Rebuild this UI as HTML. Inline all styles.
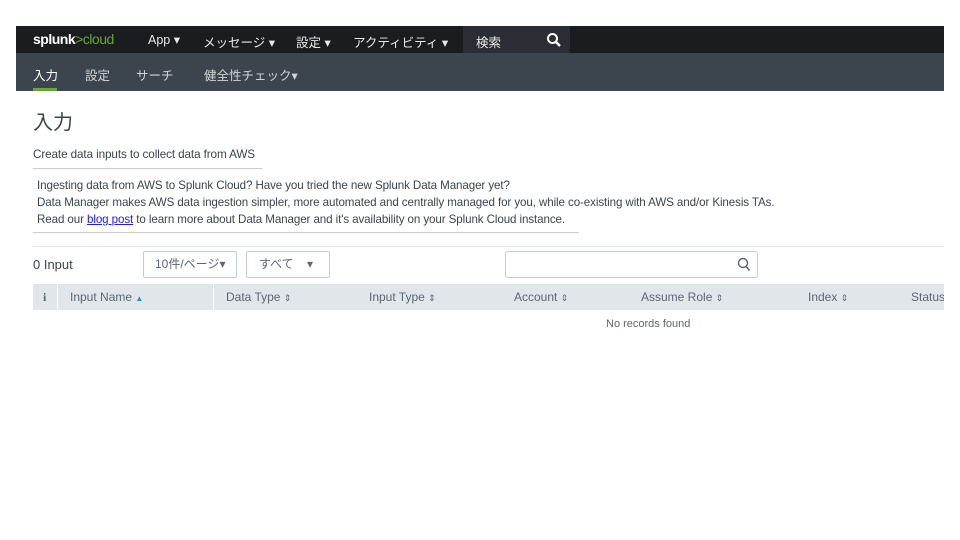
<!DOCTYPE html>
<html><head><meta charset="utf-8"><style>
*{margin:0;padding:0;box-sizing:border-box}
body{width:960px;height:540px;background:#fff;font-family:"Liberation Sans","Noto Sans CJK JP",sans-serif;position:relative;overflow:hidden;color:#3c444d}
.abs{position:absolute;white-space:nowrap}
#top{position:absolute;left:16px;top:26px;width:928px;height:27px;background:#1a1c20}
#sub{position:absolute;left:16px;top:53px;width:928px;height:38px;background:#3c444d}
.t{color:#e8e8e8;font-size:12.5px}
.s{color:#d0d3d6;font-size:12.5px}
.th{position:absolute;top:284px;height:26px;background:#e1e6eb;font-size:12px;color:#5c6773;line-height:26px;padding-left:12px}
</style></head><body>
<div id="top"></div>
<div class="abs" style="left:33px;top:31px;font-size:14px;font-weight:bold;color:#fff;letter-spacing:-0.5px">splunk<span style="color:#65a637;font-weight:normal">&gt;cloud</span></div>
<div class="abs t" style="left:148px;top:32px">App ▾</div>
<div class="abs t" style="left:203px;top:32px">メッセージ ▾</div>
<div class="abs t" style="left:296px;top:32px">設定 ▾</div>
<div class="abs t" style="left:353px;top:32px">アクティビティ ▾</div>
<div class="abs" style="left:463px;top:26px;width:107px;height:27px;background:#2a2d33"></div>
<div class="abs t" style="left:476px;top:32px">検索</div>
<svg class="abs" style="left:546px;top:32px" width="16" height="16" viewBox="0 0 16 16"><circle cx="6.5" cy="6.5" r="4.5" fill="none" stroke="#fff" stroke-width="2"/><line x1="10" y1="10" x2="14" y2="14" stroke="#fff" stroke-width="2.4"/></svg>
<div id="sub"></div>
<div class="abs s" style="left:33px;top:65px;color:#fff">入力</div>
<div class="abs" style="left:33px;top:88px;width:24px;height:3px;background:#65a637"></div>
<div class="abs s" style="left:85px;top:65px">設定</div>
<div class="abs s" style="left:136px;top:65px">サーチ</div>
<div class="abs s" style="left:204px;top:65px">健全性チェック▾</div>
<div class="abs" style="left:33px;top:106px;font-size:20px;color:#3c444d">入力</div>
<div class="abs" style="left:33px;top:148px;font-size:11.7px;letter-spacing:-0.1px">Create data inputs to collect data from AWS</div>
<div class="abs" style="left:33px;top:168px;width:229px;height:1px;background:#ccc"></div>
<div class="abs" style="left:37px;top:177px;font-size:11.6px;line-height:17px;letter-spacing:-0.1px">Ingesting data from AWS to Splunk Cloud? Have you tried the new Splunk Data Manager yet?<br>Data Manager makes AWS data ingestion simpler, more automated and centrally managed for you, while co-existing with AWS and/or Kinesis TAs.<br>Read our <span style="color:#1a1aff;text-decoration:underline">blog post</span> to learn more about Data Manager and it's availability on your Splunk Cloud instance.</div>
<div class="abs" style="left:33px;top:232px;width:546px;height:1px;background:#ccc"></div>
<div class="abs" style="left:33px;top:246px;width:911px;height:1px;background:#e6e6e6"></div>
<div class="abs" style="left:33px;top:257px;font-size:13px">0 Input</div>
<div class="abs" style="left:143px;top:251px;width:94px;height:27px;border:1px solid #c3cbd4;border-radius:2px;font-size:12px;line-height:25px;padding-left:11px;color:#5c6773">10件/ページ▾</div>
<div class="abs" style="left:246px;top:251px;width:84px;height:27px;border:1px solid #c3cbd4;border-radius:2px;font-size:12px;line-height:25px;padding-left:12px;color:#5c6773">すべて &nbsp;&nbsp; ▾</div>
<div class="abs" style="left:505px;top:251px;width:253px;height:27px;border:1px solid #c3cbd4;border-radius:3px"></div>
<svg class="abs" style="left:737px;top:257px" width="14" height="15" viewBox="0 0 14 15"><circle cx="6" cy="6" r="4.5" fill="none" stroke="#5c6773" stroke-width="1.4"/><line x1="9.2" y1="9.5" x2="12.5" y2="13.5" stroke="#5c6773" stroke-width="1.6"/></svg>
<div class="th" style="left:33px;width:24px;padding-left:10px;font-weight:bold;font-family:'Liberation Serif',serif">i</div>
<div class="th" style="left:58px;width:155px">Input Name <span style="color:#1e93c6;font-size:8px">▲</span></div>
<div class="th" style="left:214px;width:143px">Data Type <span style="font-size:9px">⇕</span></div>
<div class="th" style="left:357px;width:145px">Input Type <span style="font-size:9px">⇕</span></div>
<div class="th" style="left:502px;width:127px">Account <span style="font-size:9px">⇕</span></div>
<div class="th" style="left:629px;width:167px">Assume Role <span style="font-size:9px">⇕</span></div>
<div class="th" style="left:796px;width:103px">Index <span style="font-size:9px">⇕</span></div>
<div class="th" style="left:899px;width:45px;overflow:hidden">Status</div>
<div class="abs" style="left:606px;top:318px;font-size:11px;color:#5c6773">No records found</div>
</body></html>
